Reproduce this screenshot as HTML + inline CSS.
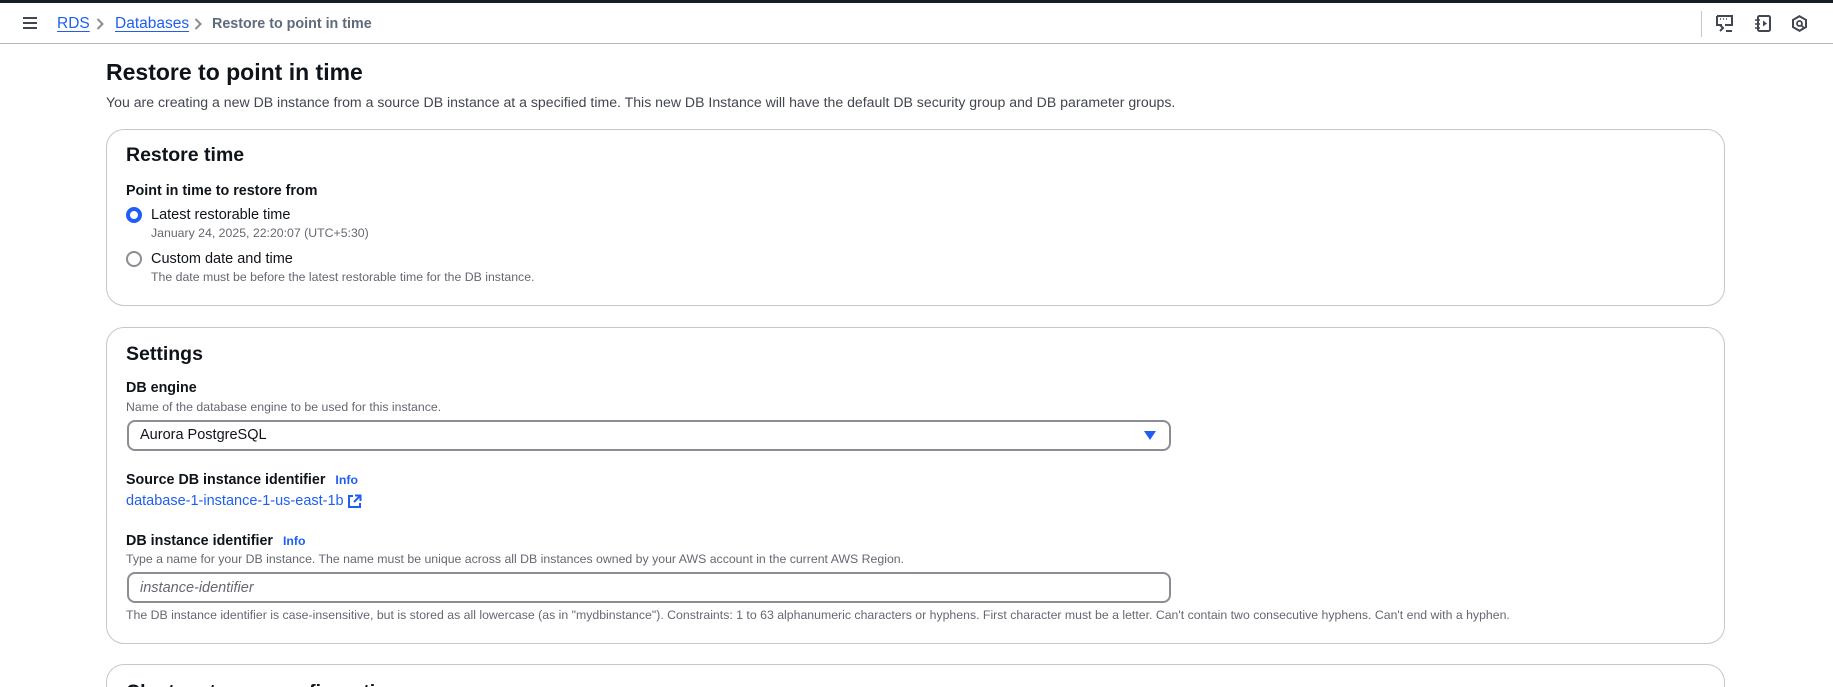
<!DOCTYPE html>
<html><head><meta charset="utf-8">
<style>
*{box-sizing:border-box;margin:0;padding:0}
html,body{width:1833px;height:687px;overflow:hidden;background:#fff;font-family:"Liberation Sans",sans-serif;color:#0f141a}
#wrap{position:relative;width:1833px;height:687px;overflow:hidden}
.topbar{position:absolute;left:0;top:0;width:1833px;height:3px;background:#161d26}
.header{position:absolute;left:0;top:3px;width:1833px;height:41px;border-bottom:1px solid #b4b4bb}
.abs{position:absolute;white-space:nowrap}
.bc{font-size:15.5px;top:15px}
.bc a{color:#1f5ef5;text-decoration:underline;text-underline-offset:3px}
.card{position:absolute;left:106px;width:1619px;border:1px solid #c6c6cd;border-radius:18px;background:#fff}
.h2{font-size:19.5px;font-weight:bold}
.lbl{font-size:14.3px;font-weight:bold}
.small{font-size:12.3px;color:#656871}
.txt{font-size:14.5px}
.info{color:#1f5ef5;font-size:12.3px;font-weight:bold;margin-left:10px}
.field{position:absolute;left:127px;width:1044px;height:31px;border:2px solid #8c8c94;border-radius:8px}
</style></head><body><div id="wrap">
<div class="topbar"></div>
<div class="header"></div>
<svg class="abs" style="left:23px;top:17px" width="14" height="12" viewBox="0 0 14 12"><rect y="0" width="14" height="2" fill="#424650"/><rect y="5" width="14" height="2" fill="#424650"/><rect y="10" width="14" height="2" fill="#424650"/></svg>
<div class="abs bc" style="left:57px"><a>RDS</a></div>
<svg class="abs" style="left:96px;top:18px" width="8" height="12" viewBox="0 0 8 12"><path d="M1.5 1l5 5-5 5" fill="none" stroke="#8c8c94" stroke-width="2"/></svg>
<div class="abs bc" style="left:115px"><a>Databases</a></div>
<svg class="abs" style="left:194px;top:18px" width="8" height="12" viewBox="0 0 8 12"><path d="M1.5 1l5 5-5 5" fill="none" stroke="#8c8c94" stroke-width="2"/></svg>
<div class="abs bc" style="left:212px;font-weight:bold;color:#5f6b7a;font-size:14.3px;top:16px">Restore to point in time</div>
<div class="abs" style="left:1701px;top:11px;width:1px;height:26px;background:#c6c6cd"></div>
<svg class="abs" style="left:1716px;top:15px" width="17" height="17" viewBox="0 0 17 17"><path d="M1 1h15v9h-7M6 10H1V1" fill="none" stroke="#424650" stroke-width="2"/><path d="M4 4h1M7 4h1M10 4h1" stroke="#424650" stroke-width="1.5"/><path d="M4 10l3 3-3 3" fill="none" stroke="#424650" stroke-width="2"/><path d="M10 16h6" stroke="#424650" stroke-width="2"/></svg>
<svg class="abs" style="left:1754px;top:15px" width="17" height="17" viewBox="0 0 17 17"><rect x="4" y="1" width="12" height="15" rx="1.5" fill="none" stroke="#424650" stroke-width="2"/><path d="M1 5h5M1 9h5M1 13h5" stroke="#424650" stroke-width="1.6"/><path d="M9 5.5l4 3-4 3z" fill="#424650"/></svg>
<svg class="abs" style="left:1791px;top:15px" width="17" height="17" viewBox="0 0 17 17"><path d="M8.5 1.2l6.5 3.7v7.2l-6.5 3.7-6.5-3.7V4.9z" fill="none" stroke="#424650" stroke-width="2"/><circle cx="8.5" cy="8.5" r="2.5" fill="none" stroke="#424650" stroke-width="1.8"/><path d="M10 10l3 3" stroke="#424650" stroke-width="1.8"/></svg>

<div class="abs" style="left:106px;top:59px;font-size:23px;font-weight:bold">Restore to point in time</div>
<div class="abs" style="left:106px;top:94px;font-size:14.1px;color:#424650">You are creating a new DB instance from a source DB instance at a specified time. This new DB Instance will have the default DB security group and DB parameter groups.</div>

<div class="card" style="top:129px;height:177px"></div>
<div class="abs h2" style="left:126px;top:144px">Restore time</div>
<div class="abs lbl" style="left:126px;top:183px">Point in time to restore from</div>
<div class="abs" style="left:126px;top:207px;width:16px;height:16px;border-radius:50%;border:4.5px solid #1f5ef5"></div>
<div class="abs txt" style="left:151px;top:207px">Latest restorable time</div>
<div class="abs small" style="left:151px;top:226px">January 24, 2025, 22:20:07 (UTC+5:30)</div>
<div class="abs" style="left:126px;top:251px;width:16px;height:16px;border-radius:50%;border:2px solid #8c8c94"></div>
<div class="abs txt" style="left:151px;top:251px">Custom date and time</div>
<div class="abs small" style="left:151px;top:270px">The date must be before the latest restorable time for the DB instance.</div>

<div class="card" style="top:327px;height:317px"></div>
<div class="abs h2" style="left:126px;top:343px">Settings</div>
<div class="abs lbl" style="left:126px;top:380px">DB engine</div>
<div class="abs small" style="left:126px;top:400px">Name of the database engine to be used for this instance.</div>
<div class="field" style="top:420px"></div>
<div class="abs txt" style="left:140px;top:427px">Aurora PostgreSQL</div>
<svg class="abs" style="left:1144px;top:431px" width="12" height="9" viewBox="0 0 12 9"><path d="M0 0h12L6 9z" fill="#1f5ef5"/></svg>
<div class="abs lbl" style="left:126px;top:472px">Source DB instance identifier<span class="info">Info</span></div>
<div class="abs txt" style="left:126px;top:493px;color:#1f5ef5">database-1-instance-1-us-east-1b</div>
<svg class="abs" style="left:347px;top:494px" width="15" height="15" viewBox="0 0 15 15"><path d="M6 2H2v11h11V9" fill="none" stroke="#1f5ef5" stroke-width="2"/><path d="M8 1.5h5.5V7M13.5 1.5L7 8" fill="none" stroke="#1f5ef5" stroke-width="2"/></svg>
<div class="abs lbl" style="left:126px;top:533px">DB instance identifier<span class="info">Info</span></div>
<div class="abs small" style="left:126px;top:552px">Type a name for your DB instance. The name must be unique across all DB instances owned by your AWS account in the current AWS Region.</div>
<div class="field" style="top:572px"></div>
<div class="abs txt" style="left:140px;top:580px;font-style:italic;color:#656871">instance-identifier</div>
<div class="abs small" style="left:126px;top:608px">The DB instance identifier is case-insensitive, but is stored as all lowercase (as in "mydbinstance"). Constraints: 1 to 63 alphanumeric characters or hyphens. First character must be a letter. Can't contain two consecutive hyphens. Can't end with a hyphen.</div>

<div class="card" style="top:664px;height:23px;border-bottom:none;border-radius:18px 18px 0 0;overflow:hidden">
<div class="abs h2" style="left:19px;top:16px">Cluster storage configuration</div>
</div>
</div></body></html>
